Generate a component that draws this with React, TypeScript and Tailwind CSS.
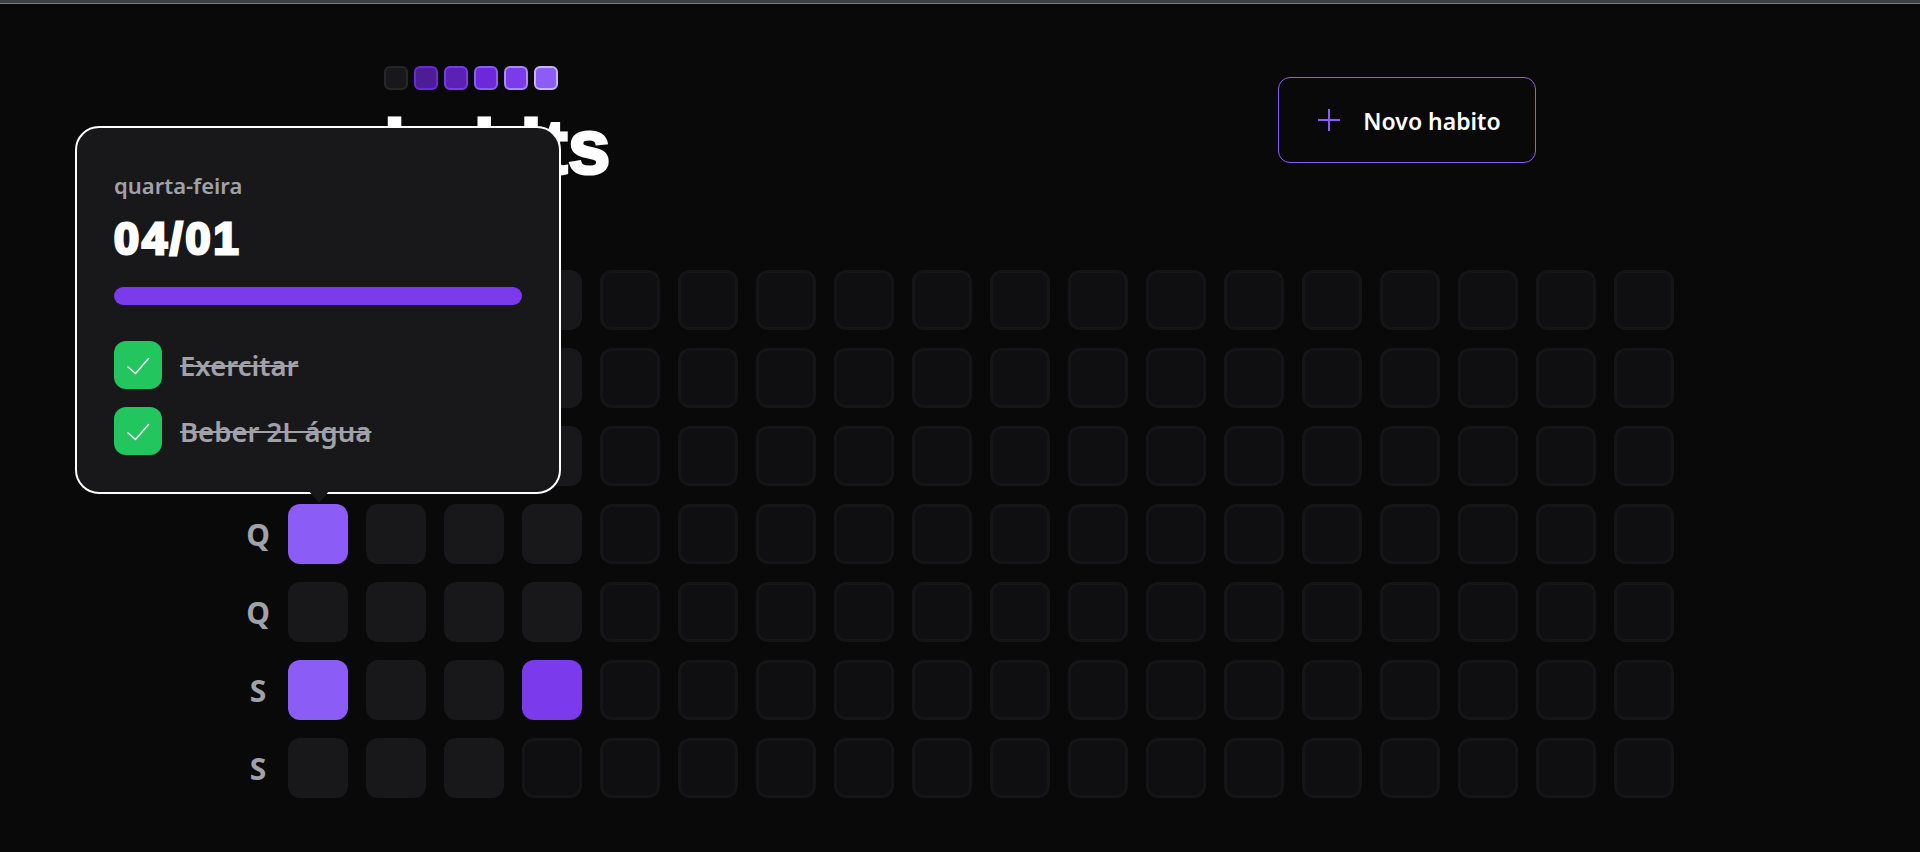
const weekDays = ["D", "S", "T", "Q", "Q", "S", "S"];
const legend = [
  "bg-[#18181b] border-[#27272a]",
  "bg-[#4c1d95] border-[#6d28d9]",
  "bg-[#5b21b6] border-[#7c3aed]",
  "bg-[#6d28d9] border-[#8b5cf6]",
  "bg-[#7c3aed] border-[#a78bfa]",
  "bg-[#8b5cf6] border-[#c4b5fd]",
];

function cellClass(col: number, row: number) {
  if (col === 0 && (row === 3 || row === 5)) return "bg-[#8b5cf6]";
  if (col === 3 && row === 5) return "bg-[#7c3aed]";
  if (col < 3 || (col === 3 && row < 6)) return "bg-[#18181b]";
  return "bg-[#0f0f11] border-[3px] border-[#151517]";
}

function CheckRow({ label }: { label: string }) {
  return (
    <div className="flex items-center gap-[18px]">
      <div className="w-12 h-12 rounded-xl bg-[#22c55e] flex items-center justify-center">
        <svg width="24" height="24" viewBox="0 0 24 24" fill="none" stroke="#ffffff" strokeWidth="1.5" strokeLinecap="round" strokeLinejoin="round">
          <path d="M2 14 L9.5 20.5 L22.5 5.5" />
        </svg>
      </div>
      <span className="pt-[2px] text-[27.5px] leading-none font-semibold text-[#a1a1aa] line-through">{label}</span>
    </div>
  );
}

export default function App() {
  const cols = Array.from({ length: 18 }, (_, i) => i);
  return (
    <div className="relative w-full h-[852px] overflow-hidden bg-[#09090a] font-['Noto_Sans',sans-serif]">
      <div className="h-1 bg-[#3f3f46] border-b border-[#7a7a80]" />

      <header className="w-[1152px] mx-auto mt-[62px] h-[108px] flex items-center justify-between">
        <div className="flex flex-col">
          <div className="flex gap-1.5">
            {legend.map((c) => (
              <div key={c} className={`w-6 h-6 rounded-md border-2 ${c}`} />
            ))}
          </div>
          <h1 className="h-[84px] text-[76px] leading-[114px] tracking-[0.5px] font-bold text-white font-['Liberation_Sans',sans-serif] [-webkit-text-stroke:3px_white]">habits</h1>
        </div>
        <button className="w-[258px] h-[86px] rounded-xl border border-[#8b5cf6] flex items-center justify-center gap-[22px] pl-[4px] text-white text-[23px] font-semibold">
          <svg width="24" height="24" viewBox="0 0 24 24" fill="none" stroke="#8b5cf6" strokeWidth="2">
            <path d="M1 12 H23 M12 1 V23" />
          </svg>
          <span className="pt-[2px]">Novo habito</span>
        </button>
      </header>

      <main className="mt-24 ml-[228px] flex">
        <div className="grid grid-rows-7 gap-[18px]">
          {weekDays.map((d, i) => (
            <div key={i} className={`w-[60px] h-[60px] flex items-center justify-center text-[30px] font-bold text-[#a1a1aa] ${i < 3 ? "invisible" : ""}`}>
              {d}
            </div>
          ))}
        </div>
        <div className="grid grid-rows-7 grid-flow-col gap-[18px]">
          {cols.flatMap((c) =>
            weekDays.map((_, r) => (
              <div key={`${c}-${r}`} className={`w-[60px] h-[60px] rounded-xl ${cellClass(c, r)}`} />
            ))
          )}
        </div>
      </main>

      <div className="absolute left-[75px] top-[126px] w-[486px] h-[368px] rounded-3xl border-2 border-white bg-[#18181b] px-[37px] pt-[42px] flex flex-col">
        <span className="text-[22px] leading-[30px] font-semibold text-[#a1a1aa]">quarta-feira</span>
        <span className="mt-[14px] text-[45px] leading-[50px] font-bold text-white font-['Liberation_Sans',sans-serif] tracking-[3px] [-webkit-text-stroke:3px_white]">04/01</span>
        <div className="mt-[23px] h-[18px] rounded-full bg-[#7c3aed]" />
        <div className="mt-9 flex flex-col gap-[18px]">
          <CheckRow label="Exercitar" />
          <CheckRow label="Beber 2L água" />
        </div>
        <svg className="absolute left-[231px] top-[362px]" width="22" height="13" viewBox="0 0 22 13">
          <polygon points="0,0 22,0 11,13" fill="#18181b" />
        </svg>
      </div>
    </div>
  );
}
